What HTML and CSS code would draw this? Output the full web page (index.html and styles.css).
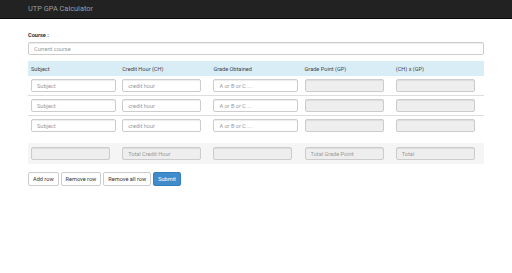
FILE: index.html
```html
<!DOCTYPE html>
<html lang="en">
<head>
    <meta charset="UTF-8">
    <title>UTP GPA Calculator</title>
    <link rel="stylesheet" href="styles.css">
</head>
<body>
    <div class="navbar">
        <div class="container">
            <span class="brand">UTP GPA Calculator</span>
        </div>
    </div>
    <div class="container">
        <label class="course-label">Course :</label>
        <input type="text" class="field course" placeholder="Current course">

        <table class="gpa">
            <thead>
                <tr>
                    <th>Subject</th>
                    <th>Credit Hour (CH)</th>
                    <th>Grade Obtained</th>
                    <th>Grade Point (GP)</th>
                    <th>(CH) x (GP)</th>
                </tr>
            </thead>
            <tbody>
                <tr>
                    <td><input type="text" class="field wide" placeholder="Subject"></td>
                    <td><input type="text" class="field" placeholder="credit hour"></td>
                    <td><input type="text" class="field wide" placeholder="A or B or C ..."></td>
                    <td><input type="text" class="field" disabled></td>
                    <td><input type="text" class="field" disabled></td>
                </tr>
                <tr>
                    <td><input type="text" class="field wide" placeholder="Subject"></td>
                    <td><input type="text" class="field" placeholder="credit hour"></td>
                    <td><input type="text" class="field wide" placeholder="A or B or C ..."></td>
                    <td><input type="text" class="field" disabled></td>
                    <td><input type="text" class="field" disabled></td>
                </tr>
                <tr>
                    <td><input type="text" class="field wide" placeholder="Subject"></td>
                    <td><input type="text" class="field" placeholder="credit hour"></td>
                    <td><input type="text" class="field wide" placeholder="A or B or C ..."></td>
                    <td><input type="text" class="field" disabled></td>
                    <td><input type="text" class="field" disabled></td>
                </tr>
            </tbody>
        </table>

        <table class="gpa totals">
            <tr>
                <td><input type="text" class="field" disabled></td>
                <td><input type="text" class="field" placeholder="Total Credit Hour" disabled></td>
                <td><input type="text" class="field" disabled></td>
                <td><input type="text" class="field" placeholder="Total Grade Point" disabled></td>
                <td><input type="text" class="field" placeholder="Total" disabled></td>
            </tr>
        </table>

        <div class="actions">
            <button class="btn">Add row</button>
            <button class="btn">Remove row</button>
            <button class="btn">Remove all row</button>
            <button class="btn primary">Submit</button>
        </div>
    </div>
</body>
</html>
```

FILE: styles.css
```css
*{
    padding:0;
    margin:0;
    box-sizing:border-box;
}
html,body{
    width:100%;
    height:100%;
    background-color:#fff;
    color:#333;
    font-family:Roboto,"Liberation Sans",sans-serif;
    font-size:5.6px;
}
.container{
    width:456px;
    margin-left:28px;
}
.navbar{
    height:19px;
    background-color:#222;
    border-bottom:1px solid #080808;
}
.brand{
    display:block;
    line-height:18px;
    font-size:7.4px;
    color:#9d9d9d;
}
.course-label{
    display:block;
    margin-top:12px;
    font-weight:bold;
    font-size:5.6px;
    line-height:8px;
    color:#333;
}
.field{
    display:block;
    width:79px;
    height:13px;
    padding:0 5px;
    font-family:inherit;
    font-size:5.6px;
    color:#555;
    background:#fff;
    border:1px solid #ccc;
    border-radius:2px;
    box-shadow:inset 0 1px 1px rgba(0,0,0,.075);
}
.field::placeholder{
    color:#999;
}
.field.wide{
    width:85px;
}
.field:disabled{
    background-color:#eee;
}
.course{
    width:456px;
    margin-top:3px;
}
.gpa{
    width:456px;
    border-collapse:collapse;
    table-layout:fixed;
    margin-top:6px;
}
.gpa th{
    height:15px;
    padding:0 3px;
    text-align:left;
    font-weight:normal;
    background-color:#d9edf7;
    color:#444;
}
.gpa td{
    padding:3px;
    border-top:1px solid #ddd;
}
.gpa tbody tr:first-child td{
    border-top:none;
}
.totals{
    margin-top:8px;
    background-color:#f5f5f5;
}
.totals td{
    border-top:none;
    padding:4px 3px;
}
.actions{
    display:flex;
    gap:2px;
    margin-top:8px;
}
.btn{
    height:14px;
    padding:0 4px;
    font-family:inherit;
    font-size:5.6px;
    color:#333;
    background:#fff;
    border:1px solid #ccc;
    border-radius:2px;
}
.btn.primary{
    color:#fff;
    background-color:#428bca;
    border-color:#357ebd;
}
```
